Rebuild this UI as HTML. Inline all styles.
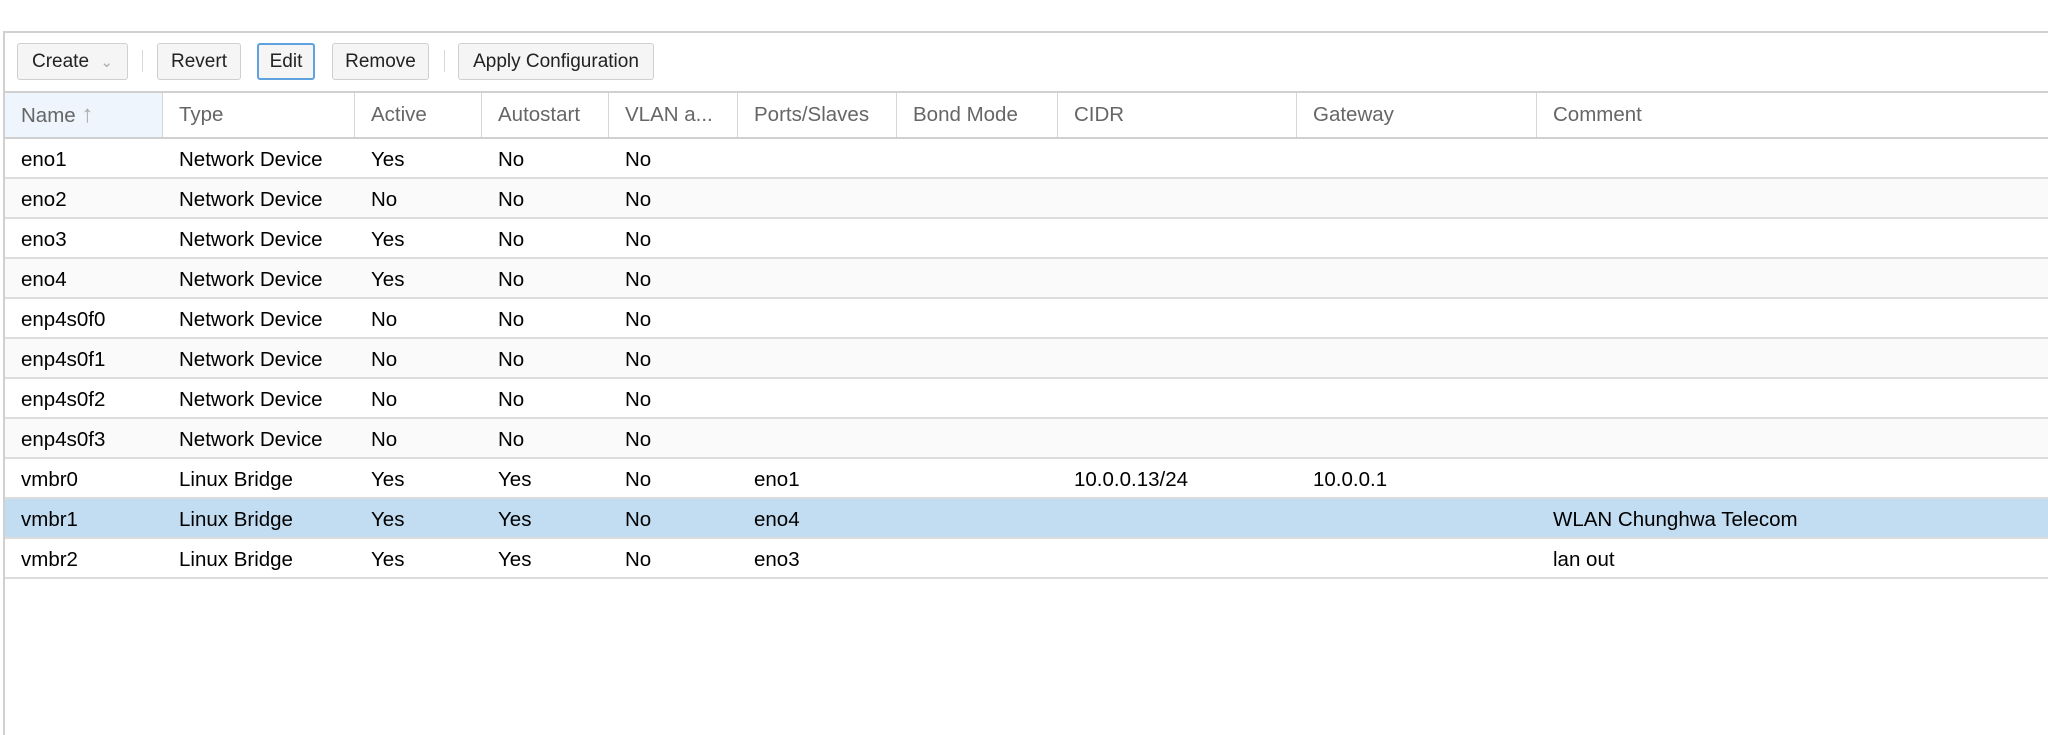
<!DOCTYPE html>
<html><head><meta charset="utf-8"><style>
*{box-sizing:border-box;margin:0;padding:0}
body{width:2048px;height:735px;background:#fff;font-family:"Liberation Sans",Arial,sans-serif;position:relative;overflow:hidden;color:#000}
.lb{position:absolute;left:3px;top:31px;width:2px;height:704px;background:#d0d0d0}
.tl{position:absolute;left:3px;right:0;top:31px;height:2px;background:#d0d0d0}
.btn{position:absolute;top:43px;height:37px;background:#f5f5f5;border:1px solid #cfcfcf;border-radius:3px;font-size:19px;line-height:35px;text-align:center;color:#222;white-space:nowrap}
.sep{position:absolute;top:50px;width:1px;height:22px;background:#d8d8d8}
.hdr{position:absolute;left:5px;right:0;top:91px;height:48px;border-top:2px solid #d0d0d0;border-bottom:2px solid #d0d0d0}
.hc{position:absolute;top:0;height:44px;line-height:44px;font-size:20.5px;color:#666;padding-left:16px;border-right:1px solid #d6d6d6;white-space:nowrap}
.row{position:absolute;left:5px;right:0;height:40px;border-bottom:2px solid #dcdcdc}
.row.alt{background:#fafafa}
.row.sel{background:#c2ddf2}
.c{position:absolute;top:2px;line-height:38px;font-size:20.5px;padding-left:16px;white-space:nowrap}
</style></head><body>
<div class="tl"></div>
<div class="lb"></div>
<div class="btn" style="left:17px;width:111px;text-align:left;padding-left:14px">Create <span style="color:#aaa;font-size:15px;margin-left:6px">&#8964;</span></div>
<div class="sep" style="left:142px"></div>
<div class="btn" style="left:157px;width:84px">Revert</div>
<div class="btn" style="left:257px;width:58px;border:2px solid #5fa2dd;line-height:33px">Edit</div>
<div class="btn" style="left:332px;width:97px">Remove</div>
<div class="sep" style="left:444px"></div>
<div class="btn" style="left:458px;width:196px">Apply Configuration</div>
<div class="hdr">
<div class="hc" style="left:0;width:158px;background:#eef5fc">Name <span style="color:#aaa;font-size:24px;font-weight:100">&#8593;</span></div>
<div class="hc" style="left:158px;width:192px">Type</div>
<div class="hc" style="left:350px;width:127px">Active</div>
<div class="hc" style="left:477px;width:127px">Autostart</div>
<div class="hc" style="left:604px;width:129px">VLAN a...</div>
<div class="hc" style="left:733px;width:159px">Ports/Slaves</div>
<div class="hc" style="left:892px;width:161px">Bond Mode</div>
<div class="hc" style="left:1053px;width:239px">CIDR</div>
<div class="hc" style="left:1292px;width:240px">Gateway</div>
<div class="hc" style="left:1532px;width:511px;border-right:none">Comment</div>
</div>
<div id="rows"></div>
<script>
var d=[["eno1","Network Device","Yes","No","No","","","",""],
["eno2","Network Device","No","No","No","","","",""],
["eno3","Network Device","Yes","No","No","","","",""],
["eno4","Network Device","Yes","No","No","","","",""],
["enp4s0f0","Network Device","No","No","No","","","",""],
["enp4s0f1","Network Device","No","No","No","","","",""],
["enp4s0f2","Network Device","No","No","No","","","",""],
["enp4s0f3","Network Device","No","No","No","","","",""],
["vmbr0","Linux Bridge","Yes","Yes","No","eno1","10.0.0.13/24","10.0.0.1",""],
["vmbr1","Linux Bridge","Yes","Yes","No","eno4","","","WLAN Chunghwa Telecom"],
["vmbr2","Linux Bridge","Yes","Yes","No","eno3","","","lan out"]];
var xs=[0,158,350,477,604,733,1053,1292,1532],h="";
d.forEach(function(r,i){var cl="row"+(i==9?" sel":(i%2==1?" alt":""));
h+='<div class="'+cl+'" style="top:'+(139+i*40)+'px">';
r.forEach(function(t,j){if(t)h+='<div class="c" style="left:'+xs[j]+'px">'+t+'</div>';});
h+='</div>';});
document.getElementById("rows").innerHTML=h;
</script>
</body></html>
